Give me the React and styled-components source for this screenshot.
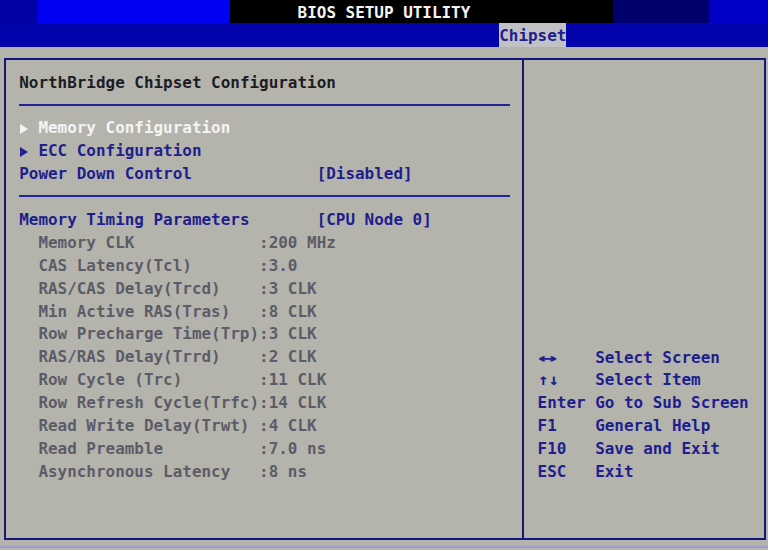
import React from "react";
import styled, { createGlobalStyle } from "styled-components";

const ROW = 22.92;
const NAVY = "#1e1e8e";

const GlobalStyle = createGlobalStyle`
  html, body {
    margin: 0;
    padding: 0;
    background: #b4b4ac;
  }
`;

const Screen = styled.div`
  width: 768px;
  height: 550px;
  overflow: hidden;
  background: #b4b4ac;
  font-family: "DejaVu Sans Mono", "Liberation Mono", monospace;
  font-weight: bold;
  font-size: 15.95px;
  line-height: ${ROW}px;
  display: flex;
  flex-direction: column;
`;

const TitleBar = styled.div`
  display: flex;
  height: 23px;
  flex-shrink: 0;
`;

const TitleBand = styled.div`
  width: ${props => props.width}px;
  background: ${props => props.bg};
  color: #f4f4f4;
  line-height: 25px;
  padding-left: ${props => (props.indent ? props.indent : 0)}px;
  box-sizing: border-box;
  white-space: pre;
`;

const TabBar = styled.div`
  display: flex;
  height: 24px;
  flex-shrink: 0;
  background: #0404ac;
  padding-left: 499.2px;
`;

const Tab = styled.div`
  background: #c2c2c6;
  color: ${NAVY};
  line-height: 26px;
`;

const Frame = styled.div`
  display: grid;
  grid-template-columns: 518px 1fr;
  height: 482px;
  margin: 11px 2px 0 4px;
  border: 2px solid #16167e;
  box-sizing: border-box;
  flex-shrink: 0;
`;

const MainPanel = styled.div`
  border-right: 2px solid #16167e;
  padding: 11.5px 12px 0 13.2px;
  display: flex;
  flex-direction: column;
`;

const Heading = styled.div`
  color: #1c1c26;
  height: ${ROW}px;
`;

const Rule = styled.div`
  height: 2px;
  background: #24249a;
  margin: ${(ROW - 2) / 2 - 1}px 0 ${(ROW - 2) / 2 + 1}px;
`;

const MenuItem = styled.div`
  display: flex;
  align-items: center;
  height: ${ROW}px;
  color: ${props => (props.selected ? "#f4f4f4" : NAVY)};
`;

const Arrow = styled.span`
  width: 2ch;
  display: flex;
  align-items: center;

  &::before {
    content: "";
    margin-left: 1px;
    border-left: 8px solid currentColor;
    border-top: 5px solid transparent;
    border-bottom: 5px solid transparent;
  }
`;

const Setting = styled.div`
  display: grid;
  grid-template-columns: 31ch 1fr;
  height: ${ROW}px;
  color: ${NAVY};
  white-space: pre;
`;

const Info = styled.div`
  display: grid;
  grid-template-columns: 23ch 1fr;
  height: ${ROW}px;
  padding-left: 2ch;
  color: #5c5c68;
  white-space: pre;
`;

const HelpPanel = styled.div`
  padding: ${11.5 + 12 * ROW}px 0 0 13.6px;
  display: flex;
  flex-direction: column;
`;

const HelpRow = styled.div`
  display: grid;
  grid-template-columns: 6ch 1fr;
  height: ${ROW}px;
  color: ${NAVY};
  white-space: pre;
`;

const KeyGlyph = styled.span`
  display: inline-block;
  transform: scaleX(${props => props.stretch});
  transform-origin: left center;
`;

const Footer = styled.div`
  height: 2px;
  margin-top: 6px;
  background: #9c9cd6;
  flex-shrink: 0;
`;

const timings = [
  ["Memory CLK", ":200 MHz"],
  ["CAS Latency(Tcl)", ":3.0"],
  ["RAS/CAS Delay(Trcd)", ":3 CLK"],
  ["Min Active RAS(Tras)", ":8 CLK"],
  ["Row Precharge Time(Trp)", ":3 CLK"],
  ["RAS/RAS Delay(Trrd)", ":2 CLK"],
  ["Row Cycle (Trc)", ":11 CLK"],
  ["Row Refresh Cycle(Trfc)", ":14 CLK"],
  ["Read Write Delay(Trwt)", ":4 CLK"],
  ["Read Preamble", ":7.0 ns"],
  ["Asynchronous Latency", ":8 ns"],
];

const help = [
  ["\u2194", "Select Screen", 2],
  ["\u2191\u2193", "Select Item", 1.1],
  ["Enter", "Go to Sub Screen", 1],
  ["F1", "General Help", 1],
  ["F10", "Save and Exit", 1],
  ["ESC", "Exit", 1],
];

export default function App() {
  return (
    <Screen>
      <GlobalStyle />
      <TitleBar>
        <TitleBand width={37} bg="#0202a4" />
        <TitleBand width={193} bg="#0000f2" />
        <TitleBand width={383} bg="#000000" indent={67.6}>
          BIOS SETUP UTILITY
        </TitleBand>
        <TitleBand width={96} bg="#00006c" />
        <TitleBand width={59} bg="#0000c8" />
      </TitleBar>
      <TabBar>
        <Tab>Chipset</Tab>
      </TabBar>
      <Frame>
        <MainPanel>
          <Heading>NorthBridge Chipset Configuration</Heading>
          <Rule />
          <MenuItem selected>
            <Arrow />
            Memory Configuration
          </MenuItem>
          <MenuItem>
            <Arrow />
            ECC Configuration
          </MenuItem>
          <Setting>
            <span>Power Down Control</span>
            <span>[Disabled]</span>
          </Setting>
          <Rule />
          <Setting>
            <span>Memory Timing Parameters</span>
            <span>[CPU Node 0]</span>
          </Setting>
          {timings.map(([label, value]) => (
            <Info key={label}>
              <span>{label}</span>
              <span>{value}</span>
            </Info>
          ))}
        </MainPanel>
        <HelpPanel>
          {help.map(([key, text, stretch]) => (
            <HelpRow key={key}>
              <span>
                <KeyGlyph stretch={stretch}>{key}</KeyGlyph>
              </span>
              <span>{text}</span>
            </HelpRow>
          ))}
        </HelpPanel>
      </Frame>
      <Footer />
    </Screen>
  );
}
